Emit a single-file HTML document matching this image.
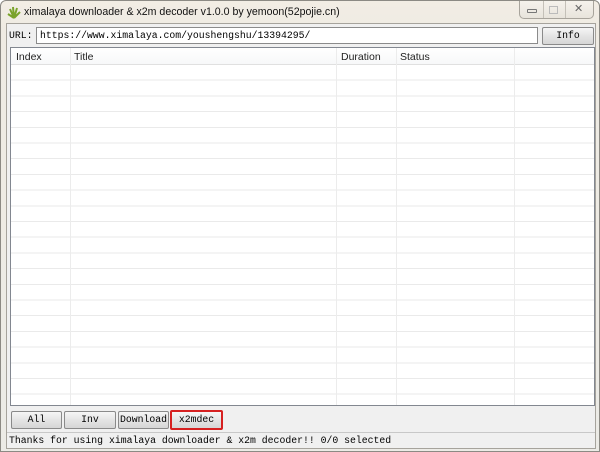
<!DOCTYPE html>
<html><head><style>
*{box-sizing:border-box;margin:0;padding:0}
body{width:600px;height:452px;overflow:hidden;background:#fff;font-family:"Liberation Sans",sans-serif}
.win{position:absolute;left:0;top:0;width:600px;height:452px;border:1px solid #8c8a84;border-radius:6px 6px 0 0;background:linear-gradient(#f2ede4,#efebe3 30px,#ecebe6);}
.title{position:absolute;left:23px;top:5px;font-size:10.6px;color:#111}
.ctl{position:absolute;top:0;left:518px;width:75px;height:18px;border:1px solid #a8a49c;border-top:none;border-radius:0 0 5px 5px;background:linear-gradient(#f5f2ec,#e8e4dc)}
.ctl i{position:absolute;top:0;bottom:0;border-left:1px solid #c4c0b8}
.client{position:absolute;left:5px;top:22px;width:590px;height:426px;background:#f0f0f0;border:1px solid #a6a39c}
.mono{font-family:"Liberation Mono",monospace;font-size:9.8px}
.url{position:absolute;left:35px;top:26px;width:502px;height:17px;border:1px solid #8b8b8b;background:#fff;padding:2px 3px}
.btn{position:absolute;height:18px;border:1px solid #8a8a8a;border-radius:2px;background:linear-gradient(#f6f6f6,#e4e4e4 50%,#d6d6d6);text-align:center;line-height:16px}
.list{position:absolute;left:9px;top:46px;width:585px;height:359px;border:1px solid #828790;background:#fff;overflow:hidden}
.hdr{position:absolute;left:0;top:0;width:100%;height:17px;border-bottom:1px solid #e0e0e0;background:linear-gradient(#fff,#f7f8f9)}
.hdr span{position:absolute;top:3px;font-size:10.5px;color:#222}
.rows{position:absolute;left:0;top:17px;width:100%;bottom:0;background:repeating-linear-gradient(#fff 0,#fff 14.7px,#eaeaea 14.7px,#eaeaea 15.7px)}
.col{position:absolute;top:0;bottom:0;border-left:1px solid #ececec}
.status{position:absolute;left:6px;top:431px;width:588px;height:16px;border-top:1px solid #c8c8c8;padding:2px 2px}
</style></head><body>
<div class="win">
<svg style="position:absolute;left:6px;top:4px" width="14" height="14" viewBox="0 0 14 14"><path d="M7 13 L3 4 M7 13 L6 2 M7 13 L10 3 M7 13 L13 7 M7 13 L1 9" stroke="#7aa32a" stroke-width="2" fill="none"/></svg>
<div class="title">ximalaya downloader &amp; x2m decoder v1.0.0 by yemoon(52pojie.cn)</div>
<div class="ctl"><i style="left:23px"></i><i style="left:45px"></i>
<div style="position:absolute;left:7px;top:8px;width:10px;height:4px;border:1px solid #777;border-radius:1px"></div>
<div style="position:absolute;left:29px;top:5px;width:9px;height:8px;border:1px solid #bbb"></div>
<div style="position:absolute;left:54px;top:1px;font-size:11px;color:#666">✕</div></div>
<div class="client"></div>
<div class="mono" style="position:absolute;left:8px;top:29px">URL:</div>
<div class="url mono">https://www.ximalaya.com/youshengshu/13394295/</div>
<div class="btn mono" style="left:541px;top:26px;width:52px">Info</div>
<div class="list">
<div class="rows"></div>
<div class="hdr"><span style="left:5px">Index</span><span style="left:63px">Title</span><span style="left:330px">Duration</span><span style="left:389px">Status</span></div>
<div class="col" style="left:59px"></div><div class="col" style="left:325px"></div><div class="col" style="left:385px"></div><div class="col" style="left:503px"></div>
</div>
<div class="btn mono" style="left:10px;top:410px;width:51px">All</div>
<div class="btn mono" style="left:63px;top:410px;width:52px">Inv</div>
<div class="btn mono" style="left:117px;top:410px;width:51px">Download</div>
<div class="btn mono" style="left:169px;top:409px;width:53px;height:20px;border:2px solid #d62020;line-height:16px">x2mdec</div>
<div class="status mono">Thanks for using ximalaya downloader &amp; x2m decoder!! 0/0 selected</div>
</div>
</body></html>
